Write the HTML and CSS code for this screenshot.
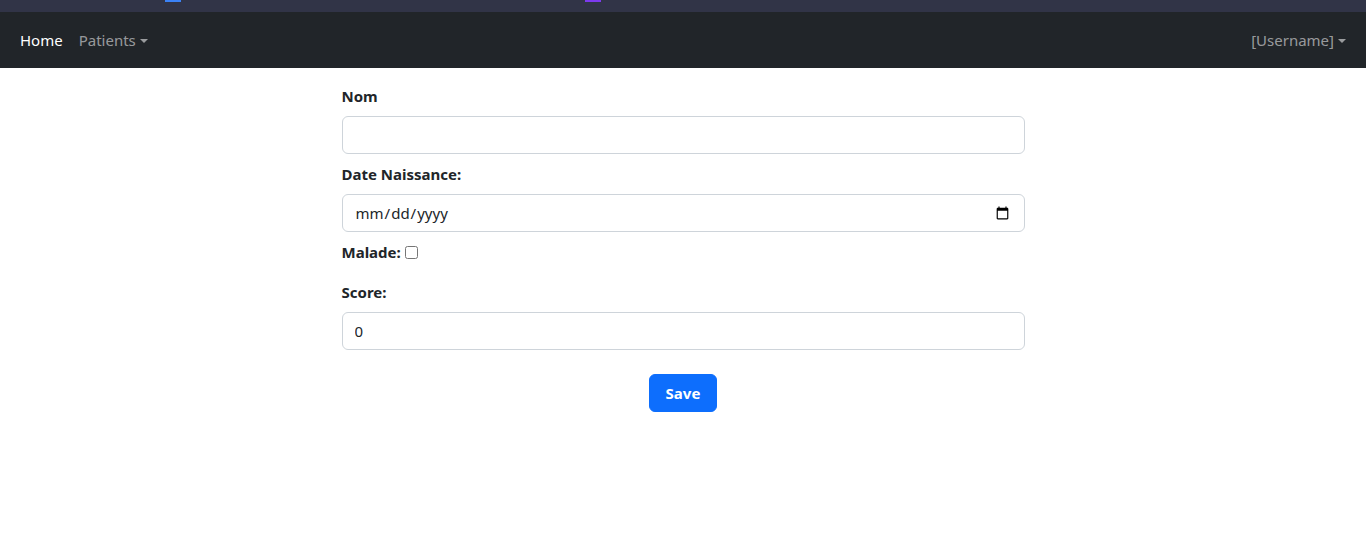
FILE: index.html
```html
<!DOCTYPE html>
<html lang="fr">
<head>
<meta charset="utf-8">
<title>Patient</title>
<link rel="stylesheet" href="styles.css">
</head>
<body>
<div class="topstrip">
  <span class="tab-mark blue"></span>
  <span class="tab-mark purple"></span>
</div>
<nav class="navbar">
  <ul class="nav-left">
    <li><a class="nav-link active" href="#">Home</a></li>
    <li><a class="nav-link dropdown" href="#">Patients</a></li>
  </ul>
  <ul class="nav-right">
    <li><a class="nav-link dropdown" href="#">[Username]</a></li>
  </ul>
</nav>
<main class="row">
  <form class="patient-form">
    <div class="field">
      <label class="form-label" for="nom">Nom</label>
      <input class="form-control" id="nom" type="text">
    </div>
    <div class="field">
      <label class="form-label" for="date">Date Naissance:</label>
      <input class="form-control" id="date" type="date">
    </div>
    <div class="field check-field">
      <label class="form-label" for="malade">Malade:</label>
      <input class="checkbox" id="malade" type="checkbox">
    </div>
    <div class="field">
      <label class="form-label" for="score">Score:</label>
      <input class="form-control" id="score" type="number" value="0">
    </div>
    <div class="actions">
      <button class="btn-primary" type="submit">Save</button>
    </div>
  </form>
</main>
</body>
</html>
```
FILE: styles.css
```css
* { box-sizing: border-box; }
html, body { margin: 0; padding: 0; }
body {
  font-family: "Noto Sans", "Open Sans", sans-serif;
  font-size: 15px;
  line-height: 24px;
  color: #212529;
  background: #fff;
}
.topstrip {
  height: 12px;
  background: #313447;
  display: flex;
}
.tab-mark {
  height: 2px;
  width: 16px;
}
.tab-mark.blue { background: #3b82f6; margin-left: 165px; }
.tab-mark.purple { background: #7c3aed; margin-left: 404px; }
.navbar {
  height: 56px;
  background: #212529;
  display: flex;
  align-items: center;
  justify-content: space-between;
  padding: 0 12px;
}
.navbar ul {
  list-style: none;
  margin: 0;
  padding: 0;
  display: flex;
}
.nav-link {
  display: block;
  padding: 8px 8px;
  color: rgba(255, 255, 255, 0.55);
  text-decoration: none;
  font-size: 15px;
  line-height: 24px;
}
.nav-link.active { color: #fff; }
.nav-link.dropdown::after {
  content: "";
  display: inline-block;
  margin-left: 4px;
  vertical-align: 3px;
  border-top: 4.8px solid;
  border-right: 4.8px solid transparent;
  border-left: 4.8px solid transparent;
}
.row {
  display: flex;
  justify-content: center;
}
.patient-form {
  width: 50%;
  padding-top: 16px;
}
.field { margin-bottom: 8px; }
.form-label {
  display: block;
  font-weight: 700;
  margin-bottom: 8px;
  font-size: 15px;
  line-height: 24px;
}
.form-control {
  display: block;
  width: 100%;
  height: 38px;
  padding: 6px 12px;
  font-family: inherit;
  font-size: 15px;
  color: #212529;
  background: #fff;
  border: 1px solid #ced4da;
  border-radius: 6px;
}
.check-field {
  display: flex;
  align-items: center;
  margin-bottom: 16px;
}
.check-field .form-label {
  display: inline-block;
  margin-bottom: 0;
}
.checkbox {
  margin: 0 0 0 4px;
  width: 13px;
  height: 13px;
}
.actions {
  display: flex;
  justify-content: center;
  padding-top: 16px;
}
.btn-primary {
  height: 38px;
  padding: 6px 16px;
  font-family: inherit;
  font-size: 15px;
  font-weight: 700;
  color: #fff;
  background: #0d6efd;
  border: 1px solid #0d6efd;
  border-radius: 6px;
}
```
